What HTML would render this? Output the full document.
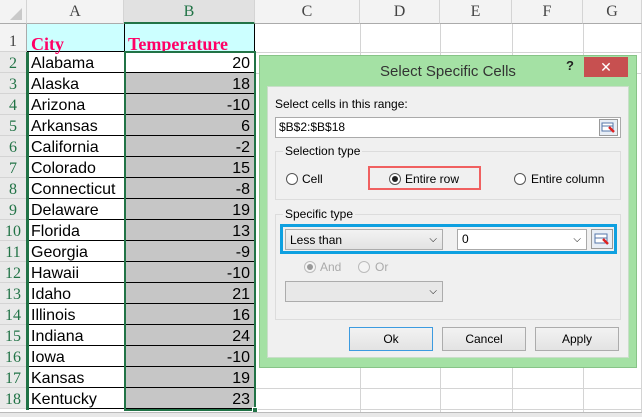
<!DOCTYPE html><html><head><style>
*{margin:0;padding:0;box-sizing:border-box}
body{width:642px;height:417px;background:#fff;position:relative;overflow:hidden;font-family:"Liberation Sans",sans-serif}
.a{position:absolute}
.ch{top:0;height:24px;background:#f3f3f3;border-right:1px solid #d4d4d4;border-bottom:1px solid #ababab;font:16px "Liberation Serif",serif;color:#444;text-align:center;line-height:24px}
.rh{left:0;width:27px;height:21px;background:#e9e9e9;border-bottom:1px solid #d4d4d4;border-right:1px solid #ababab;font:16px "Liberation Serif",serif;color:#217346;text-align:center;line-height:23px}
.c{height:21px;font-size:16px;line-height:23px;border-bottom:1px solid #000;color:#000}
.vl{top:24px;width:1px;height:393px;background:#d4d4d4}
.hl{left:255px;width:387px;height:1px;background:#d4d4d4}
.d{font-size:12px;color:#000}
.grp{border:1px solid #dcdcdc}
.btn{background:linear-gradient(#f2f2f2,#e3e3e3);border:1px solid #acacac;text-align:center;line-height:22px;font-size:12px}
.rad{width:12px;height:12px;border:1px solid #555;border-radius:50%;background:#fff}
</style></head><body>
<div class="a vl" style="left:360px"></div><div class="a vl" style="left:440px"></div><div class="a vl" style="left:512px"></div><div class="a vl" style="left:583px"></div><div class="a vl" style="left:641px"></div>
<div class="a hl" style="top:52px"></div><div class="a hl" style="top:73px"></div>
<div class="a hl" style="top:388px"></div><div class="a hl" style="top:409px"></div>
<div class="a ch" style="left:0;width:27px"><svg width="27" height="24"><polygon points="22,8 22,20 10,20" fill="#c9c9c9"/></svg></div>
<div class="a ch" style="left:27px;width:97px">A</div>
<div class="a ch" style="left:124px;width:131px;background:#e1e1e1;color:#217346;border-bottom:2px solid #217346">B</div>
<div class="a ch" style="left:255px;width:105px">C</div>
<div class="a ch" style="left:360px;width:80px">D</div>
<div class="a ch" style="left:440px;width:72px">E</div>
<div class="a ch" style="left:512px;width:71px">F</div>
<div class="a ch" style="left:583px;width:59px">G</div>
<div class="a rh" style="top:24px;height:28px;line-height:36px;color:#444;background:#f3f3f3">1</div>
<div class="a" style="left:27px;top:24px;width:228px;height:28px;background:#ccffff;border-bottom:1px solid #000;border-right:1px solid #000"></div>
<div class="a" style="left:124px;top:24px;width:1px;height:28px;background:#000"></div>
<div class="a" style="left:31px;top:30px;font:bold 18px 'Liberation Serif',serif;color:#ff0066;line-height:28px">City</div>
<div class="a" style="left:128px;top:30px;font:bold 18px 'Liberation Serif',serif;color:#ff0066;line-height:28px">Temperature</div>
<div id="rows"></div>
<script>
var d=[["Alabama",20],["Alaska",18],["Arizona",-10],["Arkansas",6],["California",-2],["Colorado",15],["Connecticut",-8],["Delaware",19],["Florida",13],["Georgia",-9],["Hawaii",-10],["Idaho",21],["Illinois",16],["Indiana",24],["Iowa",-10],["Kansas",19],["Kentucky",23]];
var h="";d.forEach(function(r,i){var t=52+i*21;
h+='<div class="a rh" style="top:'+t+'px">'+(i+2)+'</div>';
h+='<div class="a c" style="left:27px;top:'+t+'px;width:97px;padding-left:4px">'+r[0]+'</div>';
h+='<div class="a c" style="left:124px;top:'+t+'px;width:131px;text-align:right;padding-right:5px;background:'+(i?'#c6c6c6':'#fff')+'">'+r[1]+'</div>';});
document.getElementById('rows').innerHTML=h;
</script>
<div class="a" style="left:26px;top:52px;width:3px;height:358px;background:#217346"></div>
<div class="a" style="left:124px;top:51px;width:132px;height:360px;border:2px solid #217346"></div>
<div class="a" style="left:252px;top:407px;width:6px;height:6px;background:#217346;border:1px solid #fff"></div>
<div class="a" style="left:0;top:412px;width:642px;height:5px;background:#e8e8e8;border-top:1px solid #bbb"></div>
<div class="a" style="left:259px;top:55px;width:378px;height:313px;background:#a4e1a4;border:1px solid #87c487"></div>
<div class="a" style="left:259px;top:56px;width:378px;height:30px;text-align:center;font-size:15px;line-height:32px;color:#333">Select Specific Cells</div>
<div class="a" style="left:566px;top:58px;font-weight:bold;font-size:13px;color:#222">?</div>
<div class="a" style="left:584px;top:57px;width:44px;height:20px;background:#c75050;color:#fff;text-align:center;font-size:14px;line-height:20px">✕</div>
<div class="a" style="left:267px;top:86px;width:362px;height:272px;background:#f0f0f0;border:1px solid #c9dec9"></div>
<div class="a d" style="left:275px;top:97px">Select cells in this range:</div>
<div class="a" style="left:275px;top:117px;width:346px;height:21px;background:#fff;border:1px solid #aaa"></div>
<div class="a d" style="left:279px;top:120px">$B$2:$B$18</div>
<div class="a" style="left:599px;top:119px;width:19px;height:17px;border:1px solid #999;background:#e8eef6"><svg width="17" height="15"><rect x="2" y="3" width="11" height="8" fill="#fff" stroke="#5577aa"/><line x1="2" y1="6" x2="13" y2="6" stroke="#5577aa"/><path d="M9 7l5 5" stroke="#d22" stroke-width="2.5"/></svg></div>
<div class="a grp" style="left:275px;top:151px;width:346px;height:49px"></div>
<div class="a d" style="left:283px;top:144px;background:#f0f0f0;padding:0 2px">Selection type</div>
<div class="a rad" style="left:286px;top:173px"></div><div class="a d" style="left:302px;top:172px">Cell</div>
<div class="a" style="left:368px;top:166px;width:113px;height:24px;border:2px solid #f06060"></div>
<div class="a rad" style="left:389px;top:173px"><div style="width:6px;height:6px;margin:2px;border-radius:50%;background:#222"></div></div>
<div class="a d" style="left:405px;top:172px">Entire row</div>
<div class="a rad" style="left:514px;top:173px"></div><div class="a d" style="left:531px;top:172px">Entire column</div>
<div class="a grp" style="left:275px;top:214px;width:346px;height:106px"></div>
<div class="a d" style="left:283px;top:207px;background:#f0f0f0;padding:0 2px">Specific type</div>
<div class="a" style="left:280px;top:224px;width:337px;height:30px;border:3px solid #0ea0e0"></div>
<div class="a btn" style="left:285px;top:229px;width:158px;height:21px;text-align:left;padding-left:4px;line-height:20px">Less than<span style="position:absolute;right:5px;font-size:10px">⌵</span></div>
<div class="a" style="left:457px;top:229px;width:130px;height:21px;background:#fff;border:1px solid #aaa;font-size:12px;line-height:19px;padding-left:4px">0<span style="position:absolute;right:5px;font-size:10px">⌵</span></div>
<div class="a" style="left:591px;top:229px;width:22px;height:20px;border:1px solid #999;background:#e8eef6"><svg width="20" height="18"><rect x="3" y="4" width="12" height="9" fill="#fff" stroke="#5577aa"/><line x1="3" y1="8" x2="15" y2="8" stroke="#5577aa"/><path d="M11 9l5 5" stroke="#d22" stroke-width="2.5"/></svg></div>
<div class="a rad" style="left:304px;top:261px;border-color:#bbb;background:#f4f4f4"><div style="width:6px;height:6px;margin:2px;border-radius:50%;background:#999"></div></div>
<div class="a d" style="left:320px;top:260px;color:#aaa">And</div>
<div class="a rad" style="left:358px;top:261px;border-color:#bbb;background:#f4f4f4"></div>
<div class="a d" style="left:375px;top:260px;color:#aaa">Or</div>
<div class="a btn" style="left:285px;top:281px;width:158px;height:21px;background:#e8e8e8"><span style="position:absolute;right:5px;font-size:10px;line-height:20px">⌵</span></div>
<div class="a btn" style="left:349px;top:327px;width:84px;height:24px;border-color:#3c9be0">Ok</div>
<div class="a btn" style="left:442px;top:327px;width:84px;height:24px">Cancel</div>
<div class="a btn" style="left:535px;top:327px;width:84px;height:24px">Apply</div>
</body></html>
